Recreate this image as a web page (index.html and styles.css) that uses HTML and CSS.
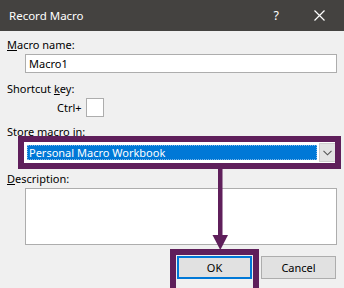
FILE: index.html
```html
<!DOCTYPE html>
<html lang="en">
<head>
    <meta charset="UTF-8">
    <link rel="stylesheet" href="styles.css">
    <title>Record Macro</title>
</head>
<body>

    <div class="dialog">
        <div class="titlebar">
            <span class="title">Record Macro</span>
            <span class="help">?</span>
            <span class="close">
                <svg width="11" height="11" viewBox="0 0 11 11">
                    <path d="M0.5 0.5 L10.5 10.5 M10.5 0.5 L0.5 10.5" stroke="#fff" stroke-width="1.2" fill="none"/>
                </svg>
            </span>
        </div>

        <div class="content">
            <div class="label"><u>M</u>acro name:</div>
            <div class="field name-field">Macro1</div>

            <div class="label label-gap">Shortcut <u>k</u>ey:</div>
            <div class="shortcut">
                <span class="ctrl">Ctrl+</span>
                <div class="keybox"></div>
            </div>

            <div class="label label-gap-sm">Store macro in:</div>
            <div class="combo">
                <div class="combo-value">Personal Macro Workbook</div>
                <div class="combo-btn">
                    <svg width="9" height="6" viewBox="0 0 9 6">
                        <path d="M0.5 0.8 L4.5 4.8 L8.5 0.8" stroke="#555" stroke-width="1.1" fill="none"/>
                    </svg>
                </div>
            </div>

            <div class="label label-gap"><u>D</u>escription:</div>
            <div class="field desc-field"></div>

            <div class="buttons">
                <div class="btn btn-default">OK</div>
                <div class="btn">Cancel</div>
            </div>
        </div>

        <!-- annotation overlays -->
        <div class="mark mark-store"></div>
        <div class="mark mark-ok"></div>
        <svg class="arrow" width="17" height="81" viewBox="0 0 17 81">
            <rect x="6" y="0" width="4.5" height="67" fill="#5f1f5b"/>
            <polygon points="0.5,66 16,66 8.3,81" fill="#5f1f5b"/>
        </svg>
    </div>

</body>
</html>
```

FILE: styles.css
```css
body {
    margin: 0;
    padding: 0;
    font-family: 'Noto Sans', 'Open Sans', sans-serif;
    font-size: 11px;
    background-color: #f0f0f0;
}

.dialog {
    position: relative;
    width: 344px;
    height: 288px;
    overflow: hidden;
    background-color: #f0f0f0;
}

.titlebar {
    height: 31px;
    background-color: #444240;
    color: #fff;
    display: flex;
    align-items: center;
    padding-left: 9px;
}

.title {
    flex: 1;
    font-size: 11.5px;
}

.help {
    font-size: 12.5px;
    margin-right: 35px;
}

.close {
    display: flex;
    margin-right: 19px;
}

.content {
    padding: 6px 7px 0 7px;
}

.label {
    line-height: 16px;
    height: 16px;
    color: #000;
}

.label-gap {
    margin-top: 8px;
}

.label-gap-sm {
    margin-top: 7px;
}

.field {
    margin-left: 18px;
    margin-top: 1px;
    width: 312px;
    box-sizing: border-box;
    background-color: #fff;
    border: 1px solid #adadad;
}

.name-field {
    height: 19px;
    line-height: 17px;
    padding-left: 3px;
}

.desc-field {
    height: 57px;
}

.shortcut {
    margin-top: 1px;
    margin-left: 50px;
    display: flex;
    align-items: center;
    height: 19px;
}

.ctrl {
    width: 29px;
}

.keybox {
    width: 18px;
    height: 19px;
    box-sizing: border-box;
    background-color: #fff;
    border: 1px solid #adadad;
}

.combo {
    margin-top: 2px;
    margin-left: 17px;
    width: 312px;
    height: 21px;
    box-sizing: border-box;
    background-color: #fff;
    display: flex;
    align-items: center;
    padding: 0 0 0 3px;
}

.combo-value {
    flex: 1;
    height: 15px;
    line-height: 15px;
    background-color: #0078d7;
    color: #fff;
    padding-left: 2px;
    outline: 1px dotted #7fb7e8;
    outline-offset: -1px;
    margin-right: 2px;
}

.combo-btn {
    width: 17px;
    height: 19px;
    box-sizing: border-box;
    background-color: #e3e3e3;
    border: 1px solid #cfcfcf;
    display: flex;
    align-items: center;
    justify-content: center;
}

.buttons {
    margin-top: 11px;
    display: flex;
    justify-content: flex-end;
    gap: 9px;
    padding-right: 1px;
}

.btn {
    width: 75px;
    height: 23px;
    box-sizing: border-box;
    background-color: #e1e1e1;
    border: 1px solid #adadad;
    text-align: center;
    line-height: 21px;
    color: #000;
}

.btn-default {
    border: 2px solid #0078d7;
    line-height: 19px;
}

.mark {
    position: absolute;
    border: 6px solid #5f1f5b;
    box-sizing: border-box;
}

.mark-store {
    left: 18px;
    top: 136px;
    width: 323px;
    height: 33px;
}

.mark-ok {
    left: 170px;
    top: 249px;
    width: 89px;
    height: 46px;
}

.arrow {
    position: absolute;
    left: 212px;
    top: 169px;
}
```
